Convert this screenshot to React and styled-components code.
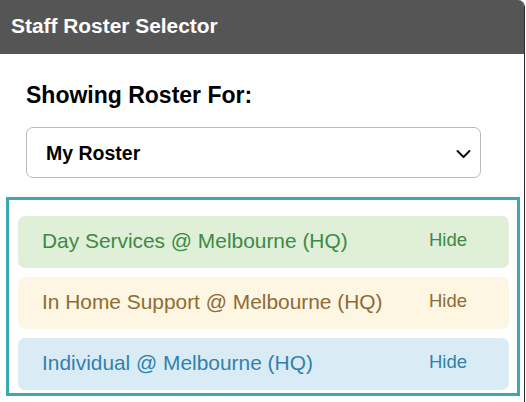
import React, { useState } from 'react'
import styled, { createGlobalStyle } from 'styled-components'

const GlobalStyle = createGlobalStyle`
  html, body {
    margin: 0;
    padding: 0;
    background: #ffffff;
  }

  body {
    font-family: "Liberation Sans", Arial, Helvetica, sans-serif;
  }
`

const Panel = styled.div`
  width: 524px;
  height: 402px;
  background: #fff;
  border-right: 1px solid #2c2c2c;
  border-top-right-radius: 7px;
  overflow: hidden;
  box-sizing: content-box;
`

const Header = styled.div`
  height: 54px;
  display: flex;
  align-items: center;
  padding: 0 11px;
  padding-bottom: 2px;
  box-sizing: border-box;
  background: #555555;
  color: #ffffff;
  font-size: 20.9px;
  font-weight: bold;
`

const Body = styled.div`
  padding: 28px 43px 0 26px;
`

const Title = styled.h2`
  margin: 0;
  font-size: 23px;
  line-height: 26px;
  font-weight: bold;
  color: #000;
`

const Select = styled.button`
  margin-top: 19px;
  width: 100%;
  height: 51px;
  display: flex;
  align-items: center;
  justify-content: space-between;
  padding: 2px 9px 0 19px;
  box-sizing: border-box;
  background: #fff;
  border: 1px solid #b9b9b9;
  border-radius: 7px;
  font-family: inherit;
  font-size: 19.5px;
  font-weight: bold;
  color: #000;
  cursor: pointer;
  text-align: left;
`

const Chevron = () => (
  <svg width="15" height="10" viewBox="0 0 15 10" fill="none">
    <path d="M1.5 2 L7.5 8 L13.5 2" stroke="#111" strokeWidth="2" strokeLinecap="round" strokeLinejoin="round" />
  </svg>
)

const List = styled.div`
  margin: 19px 4px 0 6px;
  border: 3px solid #3ba8b2;
  padding: 16px 8px 3px 9px;
  display: flex;
  flex-direction: column;
  gap: 9px;
`

const tones = {
  green: { bg: '#dfefd8', fg: '#3d8a45' },
  yellow: { bg: '#fcf6e3', fg: '#906b33' },
  blue: { bg: '#d9ecf6', fg: '#3380ae' }
}

const Row = styled.div`
  height: 52px;
  display: flex;
  align-items: center;
  justify-content: space-between;
  padding: 0 42px 0 24px;
  border-radius: 7px;
  background: ${p => tones[p.$tone].bg};
  color: ${p => tones[p.$tone].fg};
`

const Label = styled.span`
  font-size: 20.9px;
  padding-bottom: 2px;
`

const HideLink = styled.span`
  font-size: 18.5px;
  padding-bottom: 5px;
  cursor: pointer;
`

const teams = [
  { name: 'Day Services @ Melbourne (HQ)', tone: 'green' },
  { name: 'In Home Support @ Melbourne (HQ)', tone: 'yellow' },
  { name: 'Individual @ Melbourne (HQ)', tone: 'blue' }
]

function App () {
  const [hidden, setHidden] = useState([])

  return (
    <>
      <GlobalStyle />
      <Panel>
        <Header>Staff Roster Selector</Header>
        <Body>
          <Title>Showing Roster For:</Title>
          <Select type="button">
            My Roster
            <Chevron />
          </Select>
        </Body>
        <List>
          {teams.filter(t => !hidden.includes(t.name)).map(t => (
            <Row key={t.name} $tone={t.tone}>
              <Label>{t.name}</Label>
              <HideLink onClick={() => setHidden([...hidden, t.name])}>Hide</HideLink>
            </Row>
          ))}
        </List>
      </Panel>
    </>
  )
}

export default App
